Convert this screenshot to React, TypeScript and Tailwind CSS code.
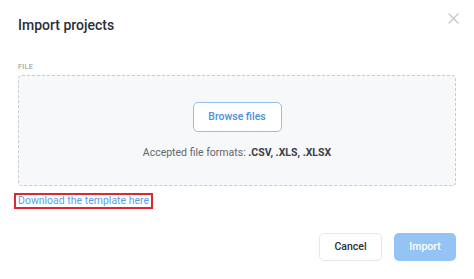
import React from "react";

export default function App() {
  return (
    <div className="w-[474px] h-[279px] bg-white font-['Roboto',sans-serif] px-[18px] pt-[14px] overflow-hidden">
      <div className="flex items-start justify-between">
        <h1 className="text-[14px] leading-[20px] font-medium text-[#2b2f36] mt-[1px]">Import projects</h1>
        <button className="mt-[-1px] mr-[-3px] text-[#c4c6ca]">
          <svg width="11" height="11" viewBox="0 0 11 11" fill="none" stroke="currentColor" strokeWidth="1.3" strokeLinecap="round">
            <path d="M1 1L10 10M10 1L1 10" />
          </svg>
        </button>
      </div>
      <div className="mt-[27px] text-[7.5px] leading-[9px] tracking-[0.2px] text-[#8f939b]">FILE</div>
      <div className="mt-[4px] h-[111px] border border-dashed border-[#c9ccd1] rounded-[4px] bg-[#f7f8fa] flex flex-col items-center pt-[26px]">
        <button className="w-[89px] h-[30px] rounded-[5px] border border-[#93bff0] bg-white text-[10.5px] font-medium text-[#4a8fdc]">
          Browse files
        </button>
        <div className="mt-[14px] text-[10.5px] leading-[13px] text-[#62666d]">
          Accepted file formats: <span className="font-bold text-[#3c4048]">.CSV, .XLS, .XLSX</span>
        </div>
      </div>
      <div className="mt-[7px] ml-[-4px] inline-flex items-center border-2 border-[#e0262f] px-[2px] h-[16px]">
        <span className="text-[10.5px] leading-[12px] text-[#5ba0e6]">Download the template here</span>
      </div>
      <div className="flex justify-end gap-[12px] mt-[22px]">
        <button className="w-[63px] h-[28px] rounded-[5px] border border-[#e6e7ea] bg-white text-[10.5px] font-medium text-[#2b2f36]">
          Cancel
        </button>
        <button className="w-[62px] h-[28px] rounded-[5px] bg-[#93c4f5] text-[10.5px] font-medium text-white">
          Import
        </button>
      </div>
    </div>
  );
}
